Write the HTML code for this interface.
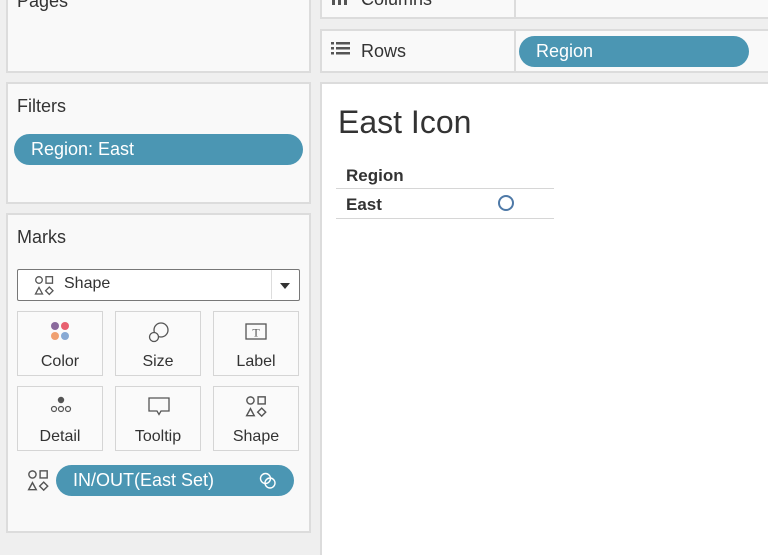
<!DOCTYPE html><html><head><style>
html,body{margin:0;overflow:hidden}
body{width:768px;height:555px;background:#efefef;position:relative;font-family:"Liberation Sans",sans-serif;color:#333}
.p{position:absolute;background:#f9f9f9;border:2px solid #dcdcdc;box-sizing:border-box}
.a{position:absolute}
.pill{position:absolute;background:#4b96b3;color:#fff;border-radius:16px;font-size:18px;box-sizing:border-box;padding-left:17px}
.btn{position:absolute;width:86px;height:65px;border:1px solid #d5d5d5;background:#fafafa;box-sizing:border-box;text-align:center;font-size:16px}
.btn svg{position:absolute;left:31px;top:8px}
.btn span{position:absolute;left:0;right:0;top:41px}
</style></head><body>
<div class="p" style="left:6px;top:-5px;width:305px;height:78px"></div>
<div class="a" style="left:17px;top:-9px;font-size:18px">Pages</div>
<div class="p" style="left:6px;top:82px;width:305px;height:122px"></div>
<div class="a" style="left:17px;top:96px;font-size:18px">Filters</div>
<div class="pill" style="left:14px;top:134px;width:289px;height:31px;line-height:30px;padding-left:17px">Region: East</div>
<div class="p" style="left:6px;top:213px;width:305px;height:320px"></div>
<div class="a" style="left:17px;top:227px;font-size:18px">Marks</div>
<div class="a" style="left:17px;top:269px;width:283px;height:32px;border:1.5px solid #777;background:#fff;box-sizing:border-box;border-radius:2px">
<svg class="a" style="left:16px;top:5px" width="22" height="22" viewBox="0 0 22 22" fill="none" stroke="#555" stroke-width="1.3"><circle cx="5" cy="5" r="3.3"/><rect x="12" y="1.7" width="6.5" height="6.5"/><path d="M5 12.5L8.5 19H1.5Z"/><path d="M15.3 12L19 15.7 15.3 19.4 11.6 15.7Z"/></svg>
<div class="a" style="left:46px;top:5px;font-size:16px">Shape</div>
<div class="a" style="left:253px;top:0;width:1px;height:29px;background:#ddd"></div>
<div class="a" style="left:262px;top:13px;width:0;height:0;border-left:5px solid transparent;border-right:5px solid transparent;border-top:6px solid #333"></div>
</div>
<div class="btn" style="left:17px;top:311px"><svg width="24" height="24" viewBox="0 0 24 24"><circle cx="6" cy="6" r="4" fill="#8a6a9c"/><circle cx="16" cy="6" r="4" fill="#e8606f"/><circle cx="6" cy="16" r="4" fill="#f0a070"/><circle cx="16" cy="16" r="4" fill="#87a9d4"/></svg><span>Color</span></div>
<div class="btn" style="left:115px;top:311px"><svg width="26" height="26" viewBox="0 0 26 26" fill="none" stroke="#555" stroke-width="1.3"><circle cx="14" cy="10" r="7"/><circle cx="7" cy="17" r="4.5" fill="#fafafa"/></svg><span>Size</span></div>
<div class="btn" style="left:213px;top:311px"><svg width="24" height="24" viewBox="0 0 24 24" fill="none" stroke="#555" stroke-width="1.3"><rect x="1" y="4" width="20" height="15"/><text x="11" y="16.5" font-size="12" font-family="Liberation Serif" fill="#555" stroke="none" text-anchor="middle">T</text></svg><span>Label</span></div>
<div class="btn" style="left:17px;top:386px"><svg width="26" height="24" viewBox="0 0 26 24" fill="none" stroke="#555" stroke-width="1.2"><circle cx="12" cy="5" r="2.6" fill="#555"/><circle cx="5" cy="14" r="2.5"/><circle cx="12" cy="14" r="2.5"/><circle cx="19" cy="14" r="2.5"/></svg><span>Detail</span></div>
<div class="btn" style="left:115px;top:386px"><svg width="26" height="26" viewBox="0 0 26 26" fill="none" stroke="#555" stroke-width="1.3"><path d="M2 3H22V16H14L12 19.5 10 16H2Z"/></svg><span>Tooltip</span></div>
<div class="btn" style="left:213px;top:386px"><svg width="24" height="24" viewBox="0 0 22 22" fill="none" stroke="#555" stroke-width="1.3"><circle cx="5" cy="5" r="3.3"/><rect x="12" y="1.7" width="6.5" height="6.5"/><path d="M5 12.5L8.5 19H1.5Z"/><path d="M15.3 12L19 15.7 15.3 19.4 11.6 15.7Z"/></svg><span>Shape</span></div>
<svg class="a" style="left:27px;top:469px" width="24" height="24" viewBox="0 0 22 22" fill="none" stroke="#555" stroke-width="1.3"><circle cx="5" cy="5" r="3.3"/><rect x="12" y="1.7" width="6.5" height="6.5"/><path d="M5 12.5L8.5 19H1.5Z"/><path d="M15.3 12L19 15.7 15.3 19.4 11.6 15.7Z"/></svg>
<div class="pill" style="left:56px;top:465px;width:238px;height:31px;line-height:30px">IN/OUT(East Set)</div>
<svg class="a" style="left:258px;top:471px" width="20" height="20" viewBox="0 0 20 20" fill="none" stroke="#fff" stroke-width="1.4"><circle cx="7.5" cy="7.5" r="5"/><circle cx="12" cy="12" r="5"/></svg>
<!-- right -->
<div class="p" style="left:320px;top:-5px;width:460px;height:24px"></div>
<div class="a" style="left:514px;top:-5px;width:2px;height:24px;background:#dcdcdc"></div>
<svg class="a" style="left:332px;top:-6px" width="16" height="12" fill="#555"><rect x="0" y="0" width="3" height="11"/><rect x="6" y="0" width="3" height="11"/><rect x="12" y="0" width="3" height="11"/></svg>
<div class="a" style="left:361px;top:-11px;font-size:18px">Columns</div>
<div class="p" style="left:320px;top:29px;width:460px;height:44px"></div>
<div class="a" style="left:514px;top:29px;width:2px;height:44px;background:#dcdcdc"></div>
<svg class="a" style="left:331px;top:42px" width="20" height="16" viewBox="0 0 20 16" fill="#555"><rect x="0" y="0" width="3" height="2.5"/><rect x="5" y="0" width="14" height="2.5"/><rect x="0" y="5" width="3" height="2.5"/><rect x="5" y="5" width="14" height="2.5"/><rect x="0" y="10" width="3" height="2.5"/><rect x="5" y="10" width="14" height="2.5"/></svg>
<div class="a" style="left:361px;top:41px;font-size:18px">Rows</div>
<div class="pill" style="left:519px;top:36px;width:230px;height:31px;line-height:30px">Region</div>
<div class="a" style="left:320px;top:82px;width:460px;height:480px;background:#fff;border:2px solid #dcdcdc;box-sizing:border-box"></div>
<div class="a" style="left:338px;top:104px;font-size:32px;color:#333;font-family:'Liberation Sans',sans-serif">East Icon</div>
<div class="a" style="left:346px;top:166px;font-size:17px;font-weight:bold;color:#333">Region</div>
<div class="a" style="left:336px;top:188px;width:218px;height:1px;background:#d6d6d6"></div>
<div class="a" style="left:346px;top:195px;font-size:17px;font-weight:bold;color:#333">East</div>
<div class="a" style="left:498px;top:195px;width:12px;height:12px;border:2.5px solid #4e79a7;border-radius:50%"></div>
<div class="a" style="left:336px;top:218px;width:218px;height:1px;background:#d6d6d6"></div>
</body></html>
